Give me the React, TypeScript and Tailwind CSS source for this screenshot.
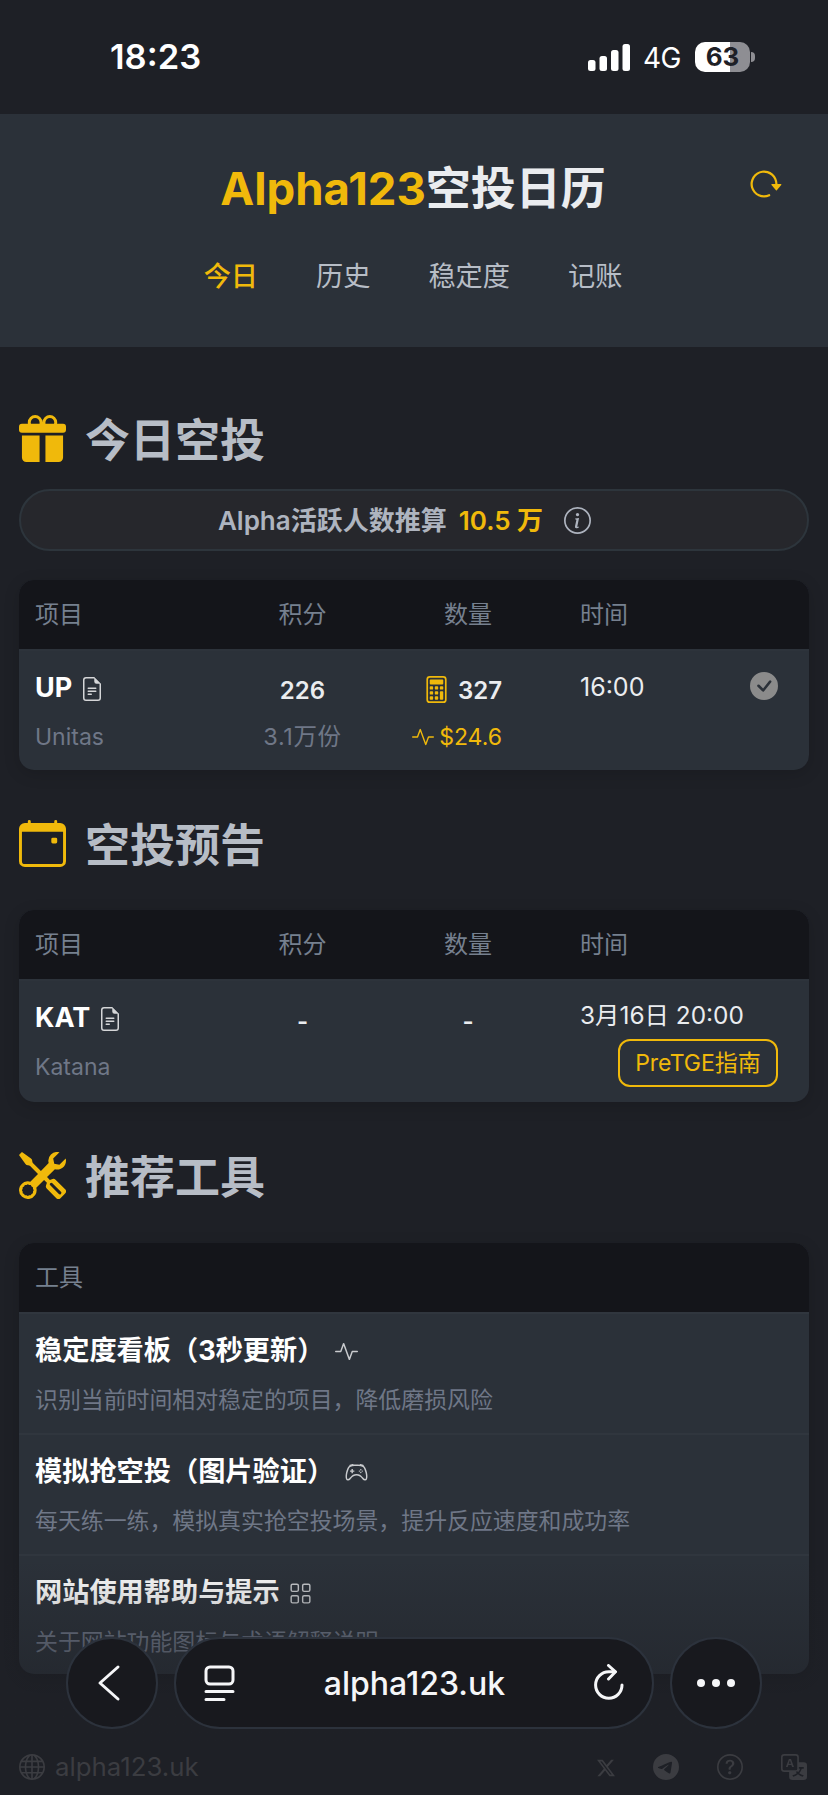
import type { ReactNode } from 'react'
import {
  BsActivity,
  BsArrowClockwise,
  BsCalculator,
  BsCalendarEvent,
  BsCheckCircleFill,
  BsController,
  BsFileEarmarkText,
  BsGiftFill,
  BsGlobe,
  BsGrid,
  BsInfoCircle,
  BsQuestionCircle,
  BsTelegram,
  BsTools,
  BsTranslate,
  BsTwitterX,
} from 'react-icons/bs'

const tabs = ['今日', '历史', '稳定度', '记账']

const tools = [
  {
    title: '稳定度看板（3秒更新）',
    desc: '识别当前时间相对稳定的项目，降低磨损风险',
    icon: <BsActivity className="ml-[11px] size-[23px]" />,
  },
  {
    title: '模拟抢空投（图片验证）',
    desc: '每天练一练，模拟真实抢空投场景，提升反应速度和成功率',
    icon: <BsController className="ml-[11px] size-[23px]" />,
  },
  {
    title: '网站使用帮助与提示',
    desc: '关于网站功能图标与术语解释说明',
    icon: <BsGrid className="ml-[9px] size-[23px]" />,
  },
]

function StatusBar() {
  return (
    <div className="flex h-[114px] items-start justify-between pt-[37px] pr-[73px] pl-[110px] text-white">
      <span className="text-[34.5px] leading-10 font-semibold">18:23</span>
      <div className="flex h-10 items-center">
        <svg width="43" height="27" viewBox="0 0 43 27" fill="currentColor">
          <rect x="0" y="16" width="7.5" height="11" rx="2.5" />
          <rect x="11.5" y="12" width="7.5" height="15" rx="2.5" />
          <rect x="23" y="6" width="7.5" height="21" rx="2.5" />
          <rect x="34.5" y="0" width="7.5" height="27" rx="2.5" />
        </svg>
        <span className="ml-3 pt-px text-[28px] leading-10 tracking-[-0.5px]">4G</span>
        <div className="ml-[14px] flex h-[30px] w-[55px] items-center justify-center rounded-[10px] bg-linear-to-r from-white from-63% to-[#8e8e93] to-63% text-[26px] leading-none font-bold text-[#1e2026]">
          63
        </div>
        <span className="ml-[1px] h-[10px] w-[4px] rounded-r-full bg-[#8e8e93]" />
      </div>
    </div>
  )
}

function Header() {
  return (
    <header className="relative h-[233px] bg-[#2b3139]">
      <h1 className="pt-[45px] pr-[2px] text-center text-[45px] leading-[60px] font-bold text-[#eaecef]">
        <span className="text-[45.5px] text-[#f0b90b]">Alpha123</span>空投日历
      </h1>
      <button className="absolute top-[52px] right-[46px] rotate-90 text-[#f0b90b]">
        <BsArrowClockwise className="size-9" />
      </button>
      <nav className="mt-[38px] flex justify-center gap-[58px] pr-[2px] text-[27.2px] leading-10 text-[#b7bdc6]">
        {tabs.map((tab, i) => (
          <a key={tab} className={i === 0 ? 'font-medium text-[#f0b90b]' : ''}>
            {tab}
          </a>
        ))}
      </nav>
    </header>
  )
}

function SectionTitle({ icon, children }: { icon: ReactNode; children: ReactNode }) {
  return (
    <h2 className="flex h-[60px] items-center gap-[19px] text-[45px] leading-[60px] font-semibold text-[#b7bdc6]">
      <span className="pb-[3px] text-[#f0b90b]">{icon}</span>
      <span className="pt-[2px]">{children}</span>
    </h2>
  )
}

function Card({ children }: { children: ReactNode }) {
  return (
    <div className="overflow-hidden rounded-[15px] bg-[#2b3139] shadow-[0_4px_16px_rgba(0,0,0,0.15)]">
      {children}
    </div>
  )
}

function TableHead() {
  return (
    <div className="grid h-[71px] grid-cols-[185px_165px_166px_1fr] items-center border-b-2 border-[#2d333b] bg-[#14151a] pl-[16px] text-[24px] text-[#76808f]">
      <span>项目</span>
      <span className="text-center">积分</span>
      <span className="text-center">数量</span>
      <span className="pl-[29px]">时间</span>
    </div>
  )
}

function Token({ symbol, name }: { symbol: string; name: string }) {
  return (
    <div className="pt-[17px]">
      <p className="flex items-center text-[27px] leading-10 font-bold text-white">
        {symbol}
        <BsFileEarmarkText className="mt-[2px] ml-[8px] size-[24px] text-[#d5d6d8]" />
      </p>
      <p className="mt-[9px] text-[23px] leading-10 text-[#6f7787]">{name}</p>
    </div>
  )
}

function BrowserBar() {
  const glass =
    'flex h-[92px] items-center rounded-full border-2 border-[#2c323c] bg-[#18191e] text-[#f5f6f8]'
  return (
    <div className="absolute top-[1637px] left-[66px] flex w-[696px] gap-4">
      <button className={`${glass} w-[92px] justify-center pr-[6px]`}>
        <svg width="24" height="38" viewBox="0 0 24 38" fill="none" stroke="currentColor" strokeWidth="3" strokeLinecap="round" strokeLinejoin="round">
          <path d="M21 3 L3 19 L21 35" />
        </svg>
      </button>
      <div className={`${glass} flex-1 justify-between pr-[27px] pl-[28px]`}>
        <svg width="32" height="38" viewBox="0 0 32 38" fill="none" stroke="currentColor" strokeWidth="3" strokeLinecap="round">
          <rect x="2" y="3" width="27" height="17" rx="4" />
          <path d="M2 27.5h27M2 35.5h18" />
        </svg>
        <span className="pt-[2px] text-[32px] font-medium">alpha123.uk</span>
        <svg width="32" height="38" viewBox="0 0 32 38" fill="none" stroke="currentColor" strokeWidth="3" strokeLinecap="round" strokeLinejoin="round">
          <path d="M29 21 A13.2 13.2 0 1 1 15.8 7.8 L22 7.8" />
          <path d="M15.5 1.5 L22.5 7.8 L15.5 15" />
        </svg>
      </div>
      <button className={`${glass} w-[92px] justify-center gap-[7px]`}>
        <span className="size-2 rounded-full bg-[#f5f6f8]" />
        <span className="size-2 rounded-full bg-[#f5f6f8]" />
        <span className="size-2 rounded-full bg-[#f5f6f8]" />
      </button>
    </div>
  )
}

export default function App() {
  return (
    <div className="relative h-[1795px] w-[828px] overflow-hidden bg-[#1e2026] font-['Inter','Noto_Sans_CJK_SC',sans-serif]">
      <StatusBar />
      <Header />

      <main className="px-[19px]">
        <section className="pt-[63px]">
          <SectionTitle icon={<BsGiftFill className="size-[47px]" />}>今日空投</SectionTitle>
          <div className="mt-[19px] flex h-[62px] items-center justify-center rounded-full border-2 border-[#2d353c] bg-[#26272c] pr-[19px] text-[26px] font-semibold text-[#aeb4bf]">
            Alpha活跃人数推算
            <span className="ml-[12px] text-[#f0b90b]">10.5 万</span>
            <BsInfoCircle className="ml-[21px] size-[27px]" />
          </div>
          <div className="mt-[29px]">
            <Card>
              <TableHead />
              <div className="grid h-[119px] grid-cols-[185px_165px_166px_1fr] pl-[16px]">
                <Token symbol="UP" name="Unitas" />
                <div className="pt-[20px] text-center">
                  <p className="text-[24px] leading-10 font-semibold text-[#eaecef]">226</p>
                  <p className="mt-[6px] text-[23.5px] leading-10 tracking-[0.6px] text-[#6f7787]">3.1万份</p>
                </div>
                <div className="flex flex-col items-end pt-[20px] pr-[49px]">
                  <p className="flex items-center gap-[8px] text-[24px] leading-10 font-semibold text-[#eaecef]">
                    <BsCalculator className="mb-[4px] size-[27px] text-[#f0b90b]" />
                    327
                  </p>
                  <p className="mt-[6px] flex items-center gap-[5px] text-[23px] leading-10 text-[#f0b90b]">
                    <BsActivity className="size-[22px]" />
                    $24.6
                  </p>
                </div>
                <div className="flex items-start justify-between pt-[16px] pr-[31px] pl-[29px] text-[25px] leading-10 text-[#eaecef]">
                  16:00
                  <BsCheckCircleFill className="mt-[5px] size-[28px] text-[#8b8b8b]" />
                </div>
              </div>
            </Card>
          </div>
        </section>

        <section className="pt-[45px]">
          <SectionTitle icon={<BsCalendarEvent className="size-[47px]" />}>空投预告</SectionTitle>
          <div className="mt-[35px]">
            <Card>
              <TableHead />
              <div className="grid h-[121px] grid-cols-[185px_165px_166px_1fr] pl-[16px]">
                <Token symbol="KAT" name="Katana" />
                <p className="pt-[21px] text-center text-[24px] leading-10 font-semibold text-[#eaecef]">-</p>
                <p className="pt-[21px] text-center text-[24px] leading-10 font-semibold text-[#eaecef]">-</p>
                <div className="pt-[14px] pr-[31px] pl-[29px] text-[#eaecef]">
                  <p className="text-[24.4px] leading-10">3月16日 20:00</p>
                  <button className="mt-[4px] ml-auto flex h-[48px] w-[160px] items-center justify-center rounded-[12px] border-2 border-[#f0b90b] text-[23px] text-[#f0b90b]">
                    PreTGE指南
                  </button>
                </div>
              </div>
            </Card>
          </div>
        </section>

        <section className="pt-[45px]">
          <SectionTitle icon={<BsTools className="size-[47px]" />}>推荐工具</SectionTitle>
          <div className="mt-[36px]">
            <Card>
              <div className="flex h-[69px] items-center bg-[#14151a] pl-[16px] text-[24px] text-[#76808f]">工具</div>
              {tools.map((tool) => (
                <div key={tool.title} className="h-[121px] border-t-2 border-[#30363e] pt-[17px] pl-[16px] last:h-[120px]">
                  <p className="flex items-center text-[27.2px] leading-10 font-bold text-white">
                    {tool.title}
                    <span className="pt-[1px] text-[#c9cbce]">{tool.icon}</span>
                  </p>
                  <p className="mt-[9px] text-[22.9px] leading-10 text-[#6f7787]">{tool.desc}</p>
                </div>
              ))}
            </Card>
          </div>
        </section>
      </main>

      <footer className="mt-[80px] flex h-[26px] items-center pr-[21px] pl-[19px] text-[#3b3c41]">
        <BsGlobe className="size-[26px]" />
        <span className="ml-[10px] text-[25.8px] leading-8">alpha123.uk</span>
        <div className="ml-auto flex items-center gap-[38px]">
          <BsTwitterX className="mt-[2px] size-[18px]" />
          <BsTelegram className="size-[26px]" />
          <BsQuestionCircle className="size-[26px]" />
          <BsTranslate className="size-[26px]" />
        </div>
      </footer>

      {/* page fades out behind the floating browser bar */}
      <div className="absolute inset-x-0 top-[1560px] h-[185px] bg-linear-to-b from-transparent to-[#1e2026]/75" />
      <BrowserBar />
    </div>
  )
}
